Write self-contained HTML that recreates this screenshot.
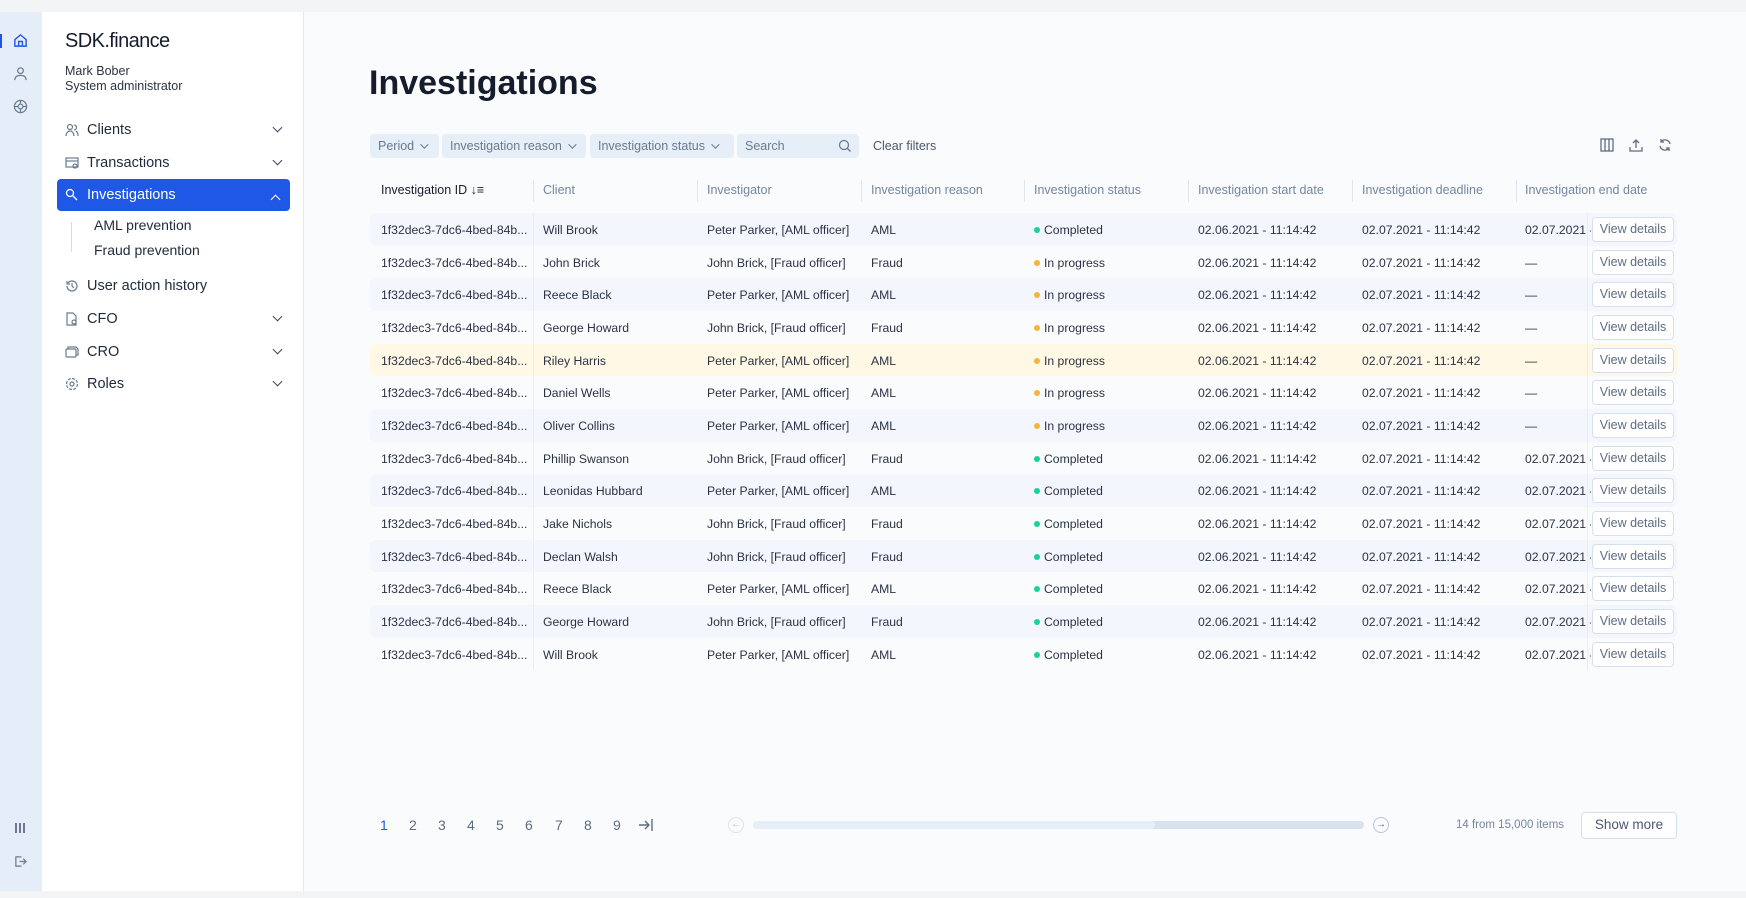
<!DOCTYPE html>
<html><head><meta charset="utf-8">
<style>
*{box-sizing:border-box;margin:0;padding:0}
body{width:1746px;height:898px;overflow:hidden;background:#f3f4f6;font-family:"Liberation Sans",sans-serif;color:#1f2a3c;position:relative}
.rail{position:absolute;left:0;top:12px;width:42px;height:879px;background:#e5edf8}
.side{position:absolute;left:42px;top:12px;width:262px;height:879px;background:#fff;border-right:1px solid #e3e9f3}
.main{position:absolute;left:304px;top:12px;width:1442px;height:879px;background:#fafbfc}
.abs{position:absolute}
.menu{position:absolute;left:44px;font-size:14.5px;color:#1f2a3c;display:flex;align-items:center;gap:8px}
.chev{position:absolute;left:232px;width:7px;height:7px;border-right:1.5px solid #3b4658;border-bottom:1.5px solid #3b4658;transform:rotate(45deg)}
.filter{position:absolute;top:134px;height:24px;background:#e6eef8;border-radius:4px;font-size:12.5px;color:#6b7a90;padding:0 8px;display:flex;align-items:center;gap:6px}
.fc{width:6px;height:6px;border-right:1.3px solid #6b7a90;border-bottom:1.3px solid #6b7a90;transform:rotate(45deg) translateY(-2px)}
.hd{position:absolute;top:183px;font-size:12.5px;color:#7486a0}
.sep{position:absolute;top:180px;width:1px;height:22px;background:#dfe6f0}
.row{position:absolute;left:370px;width:1307px;height:32.66px;font-size:12.2px;color:#2a3345}
.row.b{background:#f4f6fd;border-radius:6px}
.row.y{background:#fff8e5;border-radius:6px}
.row span{position:absolute;top:10px;white-space:nowrap}
.c1{left:11px}.c2{left:173px}.c3{left:337px}.c4{left:501px}.c5{left:664px}.c6{left:828px}.c7{left:992px}.c8{left:1155px;width:66px;overflow:hidden}
.dot{display:inline-block;width:6px;height:6px;border-radius:50%;margin-right:4px;vertical-align:1px}
.g{background:#19d29a}.o{background:#f2b540}
.vd{position:absolute;left:1222px;top:4px;width:82px;height:25px;border:1.5px solid #d5e0ee;border-radius:4px;background:#fff;font-size:12.5px;color:#5c6c84;text-align:center;line-height:22px}
.stick{position:absolute;left:1217px;top:0;width:1px;height:32.66px;background:#e8eef8}
.pg{position:absolute;top:817px;font-size:14px;color:#5c6c84}
</style></head><body>
<div class="rail">
 <div class="abs" style="left:0;top:22px;width:2px;height:14px;background:#1f57e7"></div>
 <svg class="abs" style="left:13px;top:21px" width="15" height="15" viewBox="0 0 16 16" fill="none" stroke="#1f57e7" stroke-width="1.5"><path d="M2 7l6-5 6 5v7H2z"/><path d="M6 14V9h4v5"/></svg>
 <svg class="abs" style="left:13px;top:54px" width="15" height="15" viewBox="0 0 16 16" fill="none" stroke="#6b7a90" stroke-width="1.3"><circle cx="8" cy="5" r="3"/><path d="M2 15c0-4 3-5 6-5s6 1 6 5"/></svg>
 <svg class="abs" style="left:13px;top:87px" width="15" height="15" viewBox="0 0 16 16" fill="none" stroke="#6b7a90" stroke-width="1.3"><circle cx="8" cy="8" r="6.5"/><circle cx="8" cy="8" r="2.5"/><path d="M8 1.5v4M8 10.5v4M1.5 8h4M10.5 8h4"/></svg>
 <svg class="abs" style="left:14px;top:810px" width="12" height="12" viewBox="0 0 12 12" fill="#6b7a90"><rect x="1" y="1" width="2" height="10"/><rect x="5" y="1" width="2" height="10"/><rect x="9" y="1" width="2" height="10"/></svg>
 <svg class="abs" style="left:14px;top:843px" width="13" height="13" viewBox="0 0 14 14" fill="none" stroke="#6b7a90" stroke-width="1.3"><path d="M8 2H2v10h6M6 7h7M10 4l3 3-3 3"/></svg>
</div>
<div class="side">
 <div class="abs" style="left:23px;top:18px;font-size:20px;color:#151d2c;letter-spacing:-0.6px">SDK.finance</div>
 <div class="abs" style="left:23px;top:52px;font-size:12.5px;color:#2a3345">Mark Bober</div>
 <div class="abs" style="left:23px;top:67px;font-size:12.5px;color:#2a3345">System administrator</div>
 <div class="menu" style="top:110px;left:23px"><svg width="14" height="14" viewBox="0 0 14 14" fill="none" stroke="#6b7a90" stroke-width="1.2"><circle cx="5" cy="4" r="2.5"/><path d="M1 13c0-3 2-5 4-5s4 2 4 5M9 2a2.5 2.5 0 010 5M11 8c1.5 1 2 3 2 5"/></svg>Clients</div><div class="chev" style="top:112px"></div>
 <div class="menu" style="top:143px;left:23px"><svg width="14" height="14" viewBox="0 0 14 14" fill="none" stroke="#6b7a90" stroke-width="1.2"><rect x="1" y="2" width="12" height="9"/><path d="M1 5h12"/><circle cx="10" cy="10" r="2"/></svg>Transactions</div><div class="chev" style="top:145px"></div>
 <div class="abs" style="left:15px;top:167px;width:233px;height:32px;background:#1f57e7;border-radius:4px"></div>
 <div class="menu" style="top:175px;left:23px;color:#fff"><svg width="14" height="14" viewBox="0 0 14 14" fill="none" stroke="#fff" stroke-width="1.3"><circle cx="5" cy="5" r="3.5"/><path d="M8 8l4 4"/></svg>Investigations</div>
 <div class="abs" style="left:230px;top:184px;width:7px;height:7px;border-left:1.5px solid #fff;border-top:1.5px solid #fff;transform:rotate(45deg)"></div>
 <div class="abs" style="left:29px;top:210px;width:1px;height:30px;background:#cfdcf0"></div>
 <div class="abs" style="left:52px;top:205px;font-size:14px">AML prevention</div>
 <div class="abs" style="left:52px;top:230px;font-size:14px">Fraud prevention</div>
 <div class="menu" style="top:266px;left:23px"><svg width="14" height="14" viewBox="0 0 14 14" fill="none" stroke="#6b7a90" stroke-width="1.2"><path d="M2 7a5 5 0 105-5 5 5 0 00-4 2M2 2v3h3M7 4v3l2 2"/></svg>User action history</div>
 <div class="menu" style="top:299px;left:23px"><svg width="14" height="14" viewBox="0 0 14 14" fill="none" stroke="#6b7a90" stroke-width="1.2"><path d="M2 1h6l3 3v9H2z"/><circle cx="9" cy="10" r="2"/></svg>CFO</div><div class="chev" style="top:301px"></div>
 <div class="menu" style="top:332px;left:23px"><svg width="14" height="14" viewBox="0 0 14 14" fill="none" stroke="#6b7a90" stroke-width="1.2"><rect x="1" y="4" width="10" height="8" rx="1"/><path d="M3 4V2h8l2 2v6h-2"/></svg>CRO</div><div class="chev" style="top:334px"></div>
 <div class="menu" style="top:364px;left:23px"><svg width="14" height="14" viewBox="0 0 14 14" fill="none" stroke="#6b7a90" stroke-width="1.2"><circle cx="7" cy="7" r="2"/><circle cx="7" cy="7" r="5.5" stroke-dasharray="3 1.3"/></svg>Roles</div><div class="chev" style="top:366px"></div>
</div>
<div class="main"></div>
<div class="abs" style="left:369px;top:64px;font-size:34px;font-weight:bold;color:#151d2c">Investigations</div>
<div class="filter" style="left:370px;width:69px">Period <i class="fc"></i></div>
<div class="filter" style="left:442px;width:144px">Investigation reason <i class="fc"></i></div>
<div class="filter" style="left:590px;width:144px">Investigation status <i class="fc"></i></div>
<div class="filter" style="left:737px;width:122px">Search<svg style="position:absolute;right:7px;top:5px" width="14" height="14" viewBox="0 0 14 14" fill="none" stroke="#6b7a90" stroke-width="1.3"><circle cx="6" cy="6" r="4.5"/><path d="M9.5 9.5l3 3"/></svg></div>
<div class="abs" style="left:873px;top:139px;font-size:12.5px;color:#4a5870">Clear filters</div>
<svg class="abs" style="left:1600px;top:138px" width="14" height="14" viewBox="0 0 14 14" fill="none" stroke="#5c6c84" stroke-width="1.3"><rect x="1" y="1" width="12" height="12"/><path d="M5 1v12M9 1v12"/></svg>
<svg class="abs" style="left:1629px;top:138px" width="14" height="14" viewBox="0 0 14 14" fill="none" stroke="#5c6c84" stroke-width="1.3"><path d="M7 10V2M4 5l3-3 3 3M1 9v4h12V9"/></svg>
<svg class="abs" style="left:1658px;top:138px" width="14" height="14" viewBox="0 0 14 14" fill="none" stroke="#5c6c84" stroke-width="1.3"><path d="M12 6a5 5 0 00-9-2M2 8a5 5 0 009 2M3 1v3h3M11 13v-3H8"/></svg>

<div class="hd" style="left:381px;color:#151d2c">Investigation ID <b style="font-weight:normal">↓≡</b></div>
<div class="sep" style="left:533px"></div><div class="hd" style="left:543px">Client</div>
<div class="sep" style="left:697px"></div><div class="hd" style="left:707px">Investigator</div>
<div class="sep" style="left:861px"></div><div class="hd" style="left:871px">Investigation reason</div>
<div class="sep" style="left:1024px"></div><div class="hd" style="left:1034px">Investigation status</div>
<div class="sep" style="left:1188px"></div><div class="hd" style="left:1198px">Investigation start date</div>
<div class="sep" style="left:1352px"></div><div class="hd" style="left:1362px">Investigation deadline</div>
<div class="sep" style="left:1516px"></div><div class="hd" style="left:1525px">Investigation end date</div>

<div class="row b" style="top:213px"><span class="c1">1f32dec3-7dc6-4bed-84b...</span><span class="c2">Will Brook</span><span class="c3">Peter Parker, [AML officer]</span><span class="c4">AML</span><span class="c5"><i class="dot g"></i>Completed</span><span class="c6">02.06.2021 - 11:14:42</span><span class="c7">02.07.2021 - 11:14:42</span><span class="c8">02.07.2021 - 11:14:42</span><div class="stick"></div><div class="vd">View details</div></div>
<div class="row" style="top:245.7px"><span class="c1">1f32dec3-7dc6-4bed-84b...</span><span class="c2">John Brick</span><span class="c3">John Brick, [Fraud officer]</span><span class="c4">Fraud</span><span class="c5"><i class="dot o"></i>In progress</span><span class="c6">02.06.2021 - 11:14:42</span><span class="c7">02.07.2021 - 11:14:42</span><span class="c8">—</span><div class="stick"></div><div class="vd">View details</div></div>
<div class="row b" style="top:278.3px"><span class="c1">1f32dec3-7dc6-4bed-84b...</span><span class="c2">Reece Black</span><span class="c3">Peter Parker, [AML officer]</span><span class="c4">AML</span><span class="c5"><i class="dot o"></i>In progress</span><span class="c6">02.06.2021 - 11:14:42</span><span class="c7">02.07.2021 - 11:14:42</span><span class="c8">—</span><div class="stick"></div><div class="vd">View details</div></div>
<div class="row" style="top:311px"><span class="c1">1f32dec3-7dc6-4bed-84b...</span><span class="c2">George Howard</span><span class="c3">John Brick, [Fraud officer]</span><span class="c4">Fraud</span><span class="c5"><i class="dot o"></i>In progress</span><span class="c6">02.06.2021 - 11:14:42</span><span class="c7">02.07.2021 - 11:14:42</span><span class="c8">—</span><div class="stick"></div><div class="vd">View details</div></div>
<div class="row y" style="top:343.6px"><span class="c1">1f32dec3-7dc6-4bed-84b...</span><span class="c2">Riley Harris</span><span class="c3">Peter Parker, [AML officer]</span><span class="c4">AML</span><span class="c5"><i class="dot o"></i>In progress</span><span class="c6">02.06.2021 - 11:14:42</span><span class="c7">02.07.2021 - 11:14:42</span><span class="c8">—</span><div class="stick"></div><div class="vd">View details</div></div>
<div class="row" style="top:376.3px"><span class="c1">1f32dec3-7dc6-4bed-84b...</span><span class="c2">Daniel Wells</span><span class="c3">Peter Parker, [AML officer]</span><span class="c4">AML</span><span class="c5"><i class="dot o"></i>In progress</span><span class="c6">02.06.2021 - 11:14:42</span><span class="c7">02.07.2021 - 11:14:42</span><span class="c8">—</span><div class="stick"></div><div class="vd">View details</div></div>
<div class="row b" style="top:409px"><span class="c1">1f32dec3-7dc6-4bed-84b...</span><span class="c2">Oliver Collins</span><span class="c3">Peter Parker, [AML officer]</span><span class="c4">AML</span><span class="c5"><i class="dot o"></i>In progress</span><span class="c6">02.06.2021 - 11:14:42</span><span class="c7">02.07.2021 - 11:14:42</span><span class="c8">—</span><div class="stick"></div><div class="vd">View details</div></div>
<div class="row" style="top:441.6px"><span class="c1">1f32dec3-7dc6-4bed-84b...</span><span class="c2">Phillip Swanson</span><span class="c3">John Brick, [Fraud officer]</span><span class="c4">Fraud</span><span class="c5"><i class="dot g"></i>Completed</span><span class="c6">02.06.2021 - 11:14:42</span><span class="c7">02.07.2021 - 11:14:42</span><span class="c8">02.07.2021 - 11:14:42</span><div class="stick"></div><div class="vd">View details</div></div>
<div class="row b" style="top:474.3px"><span class="c1">1f32dec3-7dc6-4bed-84b...</span><span class="c2">Leonidas Hubbard</span><span class="c3">Peter Parker, [AML officer]</span><span class="c4">AML</span><span class="c5"><i class="dot g"></i>Completed</span><span class="c6">02.06.2021 - 11:14:42</span><span class="c7">02.07.2021 - 11:14:42</span><span class="c8">02.07.2021 - 11:14:42</span><div class="stick"></div><div class="vd">View details</div></div>
<div class="row" style="top:507px"><span class="c1">1f32dec3-7dc6-4bed-84b...</span><span class="c2">Jake Nichols</span><span class="c3">John Brick, [Fraud officer]</span><span class="c4">Fraud</span><span class="c5"><i class="dot g"></i>Completed</span><span class="c6">02.06.2021 - 11:14:42</span><span class="c7">02.07.2021 - 11:14:42</span><span class="c8">02.07.2021 - 11:14:42</span><div class="stick"></div><div class="vd">View details</div></div>
<div class="row b" style="top:539.6px"><span class="c1">1f32dec3-7dc6-4bed-84b...</span><span class="c2">Declan Walsh</span><span class="c3">John Brick, [Fraud officer]</span><span class="c4">Fraud</span><span class="c5"><i class="dot g"></i>Completed</span><span class="c6">02.06.2021 - 11:14:42</span><span class="c7">02.07.2021 - 11:14:42</span><span class="c8">02.07.2021 - 11:14:42</span><div class="stick"></div><div class="vd">View details</div></div>
<div class="row" style="top:572.3px"><span class="c1">1f32dec3-7dc6-4bed-84b...</span><span class="c2">Reece Black</span><span class="c3">Peter Parker, [AML officer]</span><span class="c4">AML</span><span class="c5"><i class="dot g"></i>Completed</span><span class="c6">02.06.2021 - 11:14:42</span><span class="c7">02.07.2021 - 11:14:42</span><span class="c8">02.07.2021 - 11:14:42</span><div class="stick"></div><div class="vd">View details</div></div>
<div class="row b" style="top:605px"><span class="c1">1f32dec3-7dc6-4bed-84b...</span><span class="c2">George Howard</span><span class="c3">John Brick, [Fraud officer]</span><span class="c4">Fraud</span><span class="c5"><i class="dot g"></i>Completed</span><span class="c6">02.06.2021 - 11:14:42</span><span class="c7">02.07.2021 - 11:14:42</span><span class="c8">02.07.2021 - 11:14:42</span><div class="stick"></div><div class="vd">View details</div></div>
<div class="row" style="top:637.6px"><span class="c1">1f32dec3-7dc6-4bed-84b...</span><span class="c2">Will Brook</span><span class="c3">Peter Parker, [AML officer]</span><span class="c4">AML</span><span class="c5"><i class="dot g"></i>Completed</span><span class="c6">02.06.2021 - 11:14:42</span><span class="c7">02.07.2021 - 11:14:42</span><span class="c8">02.07.2021 - 11:14:42</span><div class="stick"></div><div class="vd">View details</div></div>
<div class="abs" style="left:533px;top:213px;width:1px;height:457px;background:#e8eef8"></div>

<div class="pg" style="left:380px;color:#1f57e7">1</div>
<div class="pg" style="left:409px">2</div>
<div class="pg" style="left:438px">3</div>
<div class="pg" style="left:467px">4</div>
<div class="pg" style="left:496px">5</div>
<div class="pg" style="left:525px">6</div>
<div class="pg" style="left:555px">7</div>
<div class="pg" style="left:584px">8</div>
<div class="pg" style="left:613px">9</div>
<svg class="abs" style="left:638px;top:818px" width="16" height="14" viewBox="0 0 16 14" fill="none" stroke="#5c6c84" stroke-width="1.4"><path d="M1 7h10M7 3l4 4-4 4M14 1v12"/></svg>
<div class="abs" style="left:728px;top:817px;width:16px;height:16px;border:1.3px solid #dbe4f0;border-radius:50%;font-size:10px;color:#b0bccd;text-align:center;line-height:13px">←</div>
<div class="abs" style="left:753px;top:821px;width:611px;height:8px;background:#d7e2ef;border-radius:4px"></div>
<div class="abs" style="left:753px;top:821px;width:402px;height:8px;background:#e6eef8;border-radius:4px"></div>
<div class="abs" style="left:1373px;top:817px;width:16px;height:16px;border:1.3px solid #b8c6d8;border-radius:50%;font-size:10px;color:#4a5870;text-align:center;line-height:13px">→</div>
<div class="abs" style="left:1456px;top:819px;font-size:11.5px;color:#7486a0">14 from 15,000 items</div>
<div class="abs" style="left:1581px;top:812px;width:96px;height:27px;border:1.5px solid #d5e0ee;border-radius:4px;background:#fff;font-size:13.5px;color:#4a5870;text-align:center;line-height:24px">Show more</div>
</body></html>
